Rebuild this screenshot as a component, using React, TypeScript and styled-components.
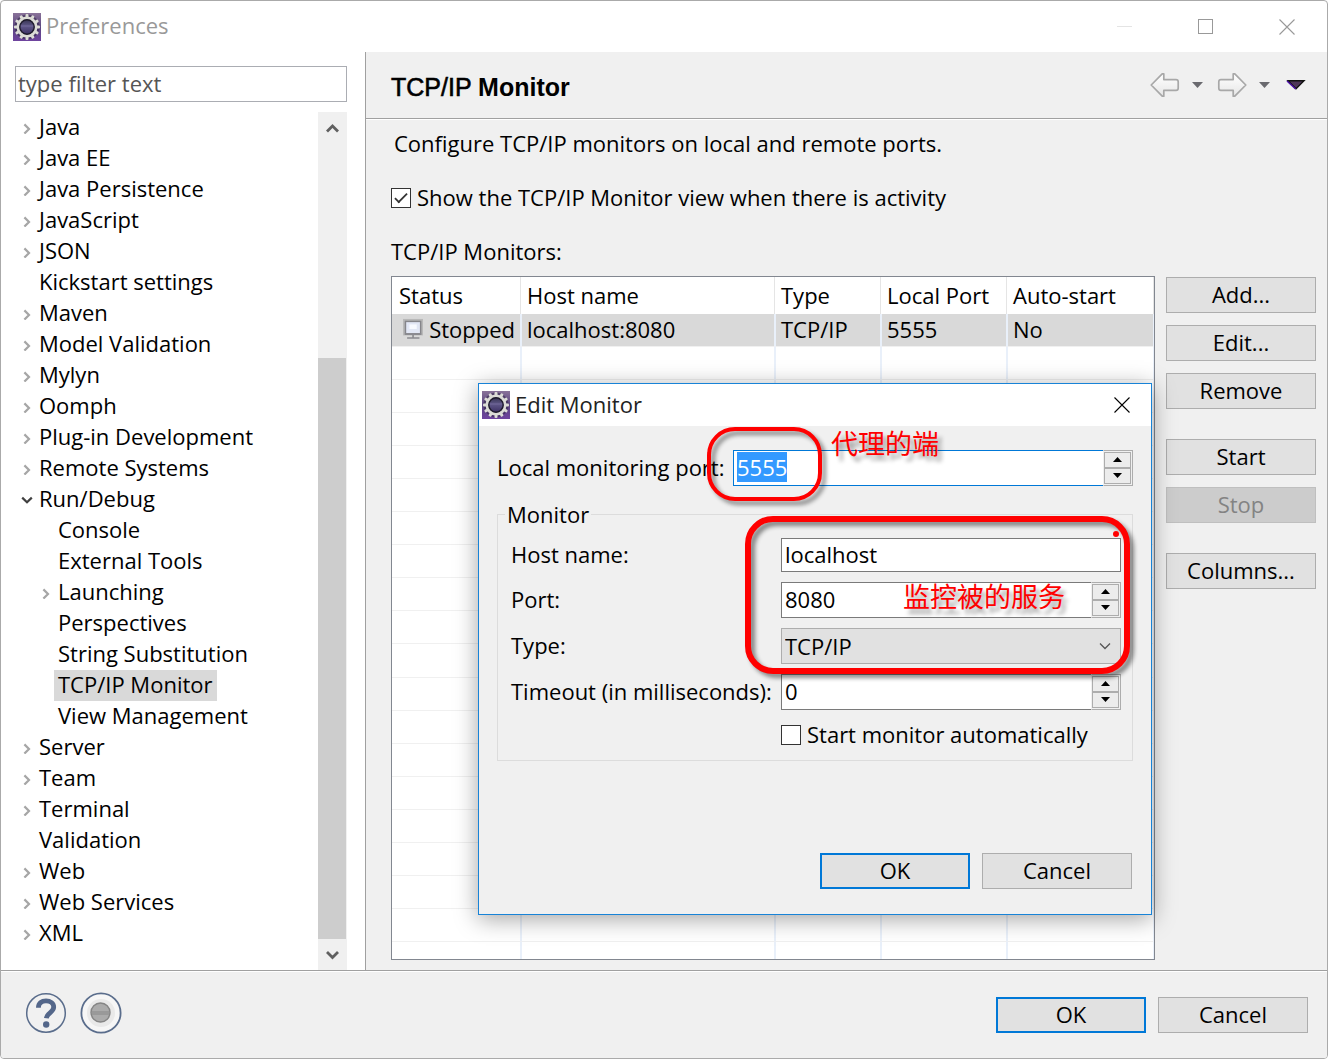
import React, { useEffect, useId, useRef, useState } from "react";
import styled, { createGlobalStyle, css } from "styled-components";

const GlobalStyle = createGlobalStyle`
  *, *::before, *::after { box-sizing: border-box; }
  body {
    margin: 0;
    background: #fff;
    color: #000;
    font-family: "Open Sans", "Noto Sans", "Noto Sans CJK SC", sans-serif;
    font-size: 22px;
    line-height: 30px;
  }
  button, input, select { font: inherit; color: inherit; margin: 0; }
`;

/* ---------- shared controls ---------- */

const PushButton = styled.button<{ $primary?: boolean }>`
  width: 150px;
  height: 36px;
  padding: 0 0 2px;
  line-height: 30px;
  background: #e1e1e1;
  border: ${(p) => (p.$primary ? "2px solid #0078d7" : "1px solid #adadad")};
  &:disabled {
    background: #ccc;
    border-color: #bfbfbf;
    color: #838383;
  }
`;

const ButtonRow = styled.div`
  display: flex;
  justify-content: flex-end;
  gap: 12px;
`;

const IconButton = styled.button`
  display: flex;
  align-items: center;
  justify-content: center;
  padding: 0;
  border: 0;
  background: none;
`;

const CheckLabel = styled.label`
  display: flex;
  align-items: center;
  gap: 6px;
`;

const CheckBox = styled.input.attrs({ type: "checkbox" })`
  appearance: none;
  flex: none;
  width: 20px;
  height: 20px;
  border: 1px solid #333;
  background: #fff;
  display: grid;
  place-items: center;
  &&:not(:disabled) { margin-top: 2px; }
  &:checked::before {
    content: "";
    width: 14px;
    height: 7px;
    border: solid #333;
    border-width: 0 0 2px 2px;
    transform: translateY(-2px) rotate(-45deg) scale(0.9);
  }
`;

const TextBox = styled.input<{ $tone?: string }>`
  width: 100%;
  min-width: 0;
  height: 34px;
  padding: 0 3px 2px;
  border: 1px solid ${(p) => p.$tone ?? "#7a7a7a"};
  border-radius: 0;
  background: #fff;
  outline: none;
  &::placeholder { color: #555; opacity: 1; }
  &::selection { background: #3399ff; color: #fff; }
`;

/* ---------- window ---------- */

const Window = styled.div`
  position: relative;
  display: flex;
  flex-direction: column;
  min-height: 100vh;
  border: 1px solid #aaa;
  border-radius: 4px;
  overflow: hidden;
`;

const TitleBar = styled.header`
  display: flex;
  align-items: center;
  height: 51px;
  padding: 0 32px 0 12px;
  gap: 5px;
`;

const WindowTitle = styled.h1<{ $color: string }>`
  flex: 1;
  margin: 0;
  padding-bottom: 3px;
  font-size: 22px;
  font-weight: 400;
  line-height: 30px;
  color: ${(p) => p.$color};
`;

const CaptionButtons = styled.div`
  display: flex;
  gap: 65px;
`;

const Body = styled.div`
  flex: 1;
  display: flex;
  border-bottom: 1px solid #a0a0a0;
`;

const Footer = styled.footer`
  display: flex;
  align-items: center;
  justify-content: space-between;
  height: 87px;
  padding: 0 19px 0 24px;
  border-top: 1px solid #fff;
  background: #f0f0f0;
`;

const FooterTools = styled.div`
  display: flex;
  gap: 13px;
  padding-bottom: 4px;
`;

/* ---------- sidebar ---------- */

const Sidebar = styled.aside`
  display: flex;
  flex-direction: column;
  flex: none;
  width: 365px;
  padding: 14px 18px 0 14px;
  gap: 10px;
  border-right: 1px solid #a0a0a0;
`;

const FilterBox = styled(TextBox)`
  height: 36px;
  padding: 0 2px 2px;
`;

const TreeArea = styled.div`
  flex: 1;
  display: flex;
`;

const Tree = styled.ul`
  flex: 1;
  margin: 0;
  padding: 0 0 20px;
  list-style: none;
`;

const TreeItem = styled.li<{ $level: number }>`
  display: flex;
  align-items: center;
  height: 31px;
  padding-left: ${(p) => 3 + p.$level * 19}px;
`;

const Twisty = styled.span`
  display: flex;
  justify-content: center;
  width: 17px;
`;

const TreeLabel = styled.span<{ $selected?: boolean }>`
  height: 31px;
  padding: 0 4px;
  line-height: 28px;
  background: ${(p) => (p.$selected ? "#d9d9d9" : "transparent")};
`;

const ScrollBar = styled.div`
  display: flex;
  flex-direction: column;
  width: 29px;
  background: #f0f0f0;
`;

const ScrollStep = styled(IconButton)`
  height: 31px;
`;

const ScrollGap = styled.div`
  flex: 215;
`;

const ScrollThumb = styled.div`
  flex: 582;
  margin-right: 1px;
  background: #cdcdcd;
`;

/* ---------- preference page ---------- */

const Page = styled.main`
  flex: 1;
  min-width: 0;
  display: flex;
  flex-direction: column;
  background: #f0f0f0;
`;

const PageHeader = styled.div`
  display: flex;
  align-items: center;
  justify-content: space-between;
  height: 67px;
  padding: 0 21px 0 25px;
  border-bottom: 1px solid #a0a0a0;
`;

const PageTitle = styled.h2`
  margin: 0;
  padding-top: 4px;
  font-family: "Liberation Sans", Arial, sans-serif;
  font-size: 25px;
  font-weight: 400;
  line-height: 30px;
  -webkit-text-stroke: 0.6px #000;
`;

const HeavyWord = styled.span`
  font-weight: 700;
  -webkit-text-stroke: 0;
`;

const NavTools = styled.div`
  display: flex;
  align-items: center;
  gap: 12px;
`;

const NavDropdown = styled(IconButton)`
  margin-right: 2px;
`;

const NavMenu = styled(IconButton)`
  margin-left: 2px;
`;

const PageContent = styled.div`
  flex: 1;
  display: flex;
  flex-direction: column;
  padding: 8px 11px 10px 25px;
  border-top: 1px solid #fff;
`;

const Description = styled.p`
  margin: 0 0 24px 3px;
`;

const ListHeading = styled.div`
  margin: 24px 0 10px;
`;

const MonitorsArea = styled.div`
  flex: 1;
  display: flex;
  gap: 11px;
`;

const TableFrame = styled.div`
  flex: 1;
  min-width: 0;
  border: 1px solid #828790;
  background: #fff;
`;

const Table = styled.table`
  width: 100%;
  height: 100%;
  table-layout: fixed;
  border-collapse: separate;
  border-spacing: 0;
`;

const HeadCell = styled.th`
  height: 37px;
  padding: 0 6px 2px;
  border-right: 1px solid #e5e5e5;
  font-weight: 400;
  text-align: left;
  white-space: nowrap;
  &:first-child { padding-left: 7px; }
`;

const Cell = styled.td`
  padding: 0 5px 2px;
  border: solid #e9f0fa;
  border-width: 0 1px;
  white-space: nowrap;
  &:first-child {
    padding-left: 7px;
    border-left: 0;
  }
`;

const Row = styled.tr<{ $selected?: boolean; $last?: boolean }>`
  height: ${(p) => (p.$last ? 17 : 33)}px;
  & > td {
    border-bottom: ${(p) => (p.$last ? "0" : "1px solid #f0f0f0")};
    ${(p) =>
      p.$selected &&
      css`
        background: #d9d9d9;
        background-clip: padding-box;
      `}
  }
`;

const StatusCell = styled.span`
  display: flex;
  align-items: center;
  gap: 6px;
  padding-left: 4px;
`;

const SideButtons = styled.div`
  display: flex;
  flex-direction: column;
  gap: 30px;
  padding-top: 1px;
`;

const SideGroup = styled.div`
  display: flex;
  flex-direction: column;
  gap: 12px;
`;

/* ---------- dialog ---------- */

const Dialog = styled.section`
  position: absolute;
  left: 477px;
  top: 382px;
  width: 674px;
  border: 1px solid #1883d7;
  background: #f0f0f0;
  box-shadow: 0 4px 22px rgba(0, 0, 0, 0.36);
`;

const DialogTitleBar = styled.div`
  display: flex;
  align-items: center;
  height: 42px;
  padding: 0 21px 0 3px;
  gap: 5px;
  background: #fff;
`;

const DialogBody = styled.div`
  padding: 24px 18px 25px;
`;

const DialogButtons = styled(ButtonRow)`
  padding-right: 1px;
`;

const PortRow = styled.div`
  display: grid;
  grid-template-columns: 225px 1fr;
  gap: 11px;
  align-items: center;
`;

const Group = styled.fieldset`
  min-width: 0;
  margin: 13px 0 92px;
  padding: 9px 11px 12px 13px;
  border: 1px solid #dcdcdc;
`;

const Legend = styled.legend`
  margin-left: -6px;
  padding: 0 2px;
`;

const FieldGrid = styled.div`
  display: grid;
  grid-template-columns: 260px 1fr;
  gap: 10px;
  align-items: center;
`;

const FieldLabel = styled.label`
  padding-bottom: 2px;
  white-space: nowrap;
`;

const AutoStart = styled.div`
  grid-column: 2;
  line-height: 28px;
`;

const SpinnerFrame = styled.div`
  display: flex;
  height: 36px;
`;

const SpinnerInput = styled(TextBox)`
  height: 36px;
  border-right: 0;
`;

const SpinnerButtons = styled.div`
  display: flex;
  flex-direction: column;
  flex: none;
  width: 30px;
  padding: 1px 1px 1px 0;
  border: 1px solid #adadad;
  border-left-color: #f0f0f0;
`;

const SpinStep = styled(IconButton)`
  flex: 1;
  padding-bottom: 2px;
  border: 1px solid #adadad;
  background: #ececec;
`;

const SelectFrame = styled.div`
  display: grid;
  align-items: center;
  & > * { grid-area: 1 / 1; }
  & > svg { justify-self: end; margin-right: 10px; pointer-events: none; }
`;

const Select = styled.select`
  appearance: none;
  width: 100%;
  height: 36px;
  padding: 0 3px 1px;
  border: 1px solid #adadad;
  border-radius: 0;
  background: #e1e1e1;
`;

/* ---------- annotations drawn over the dialog ---------- */

const Highlight = styled.div<{ $x: number; $y: number; $w: number; $h: number; $line: number }>`
  position: absolute;
  left: ${(p) => p.$x}px;
  top: ${(p) => p.$y}px;
  width: ${(p) => p.$w}px;
  height: ${(p) => p.$h}px;
  border: ${(p) => p.$line}px solid #f00;
  border-radius: 28px;
  filter: drop-shadow(4px 4px 2px rgba(0, 0, 0, 0.45));
  pointer-events: none;
`;

const Note = styled.span<{ $x: number; $y: number }>`
  position: absolute;
  left: ${(p) => p.$x}px;
  top: ${(p) => p.$y}px;
  color: #f00;
  font-family: "Noto Sans CJK SC", sans-serif;
  font-size: 27px;
  line-height: 30px;
  white-space: nowrap;
  text-shadow: 4px 5px 4px rgba(0, 0, 0, 0.4);
  pointer-events: none;
`;

const Dot = styled.span`
  position: absolute;
  left: 634px;
  top: 147px;
  width: 6px;
  height: 6px;
  border-radius: 50%;
  background: #f00;
`;

/* ---------- icons ---------- */

const GearIcon = () => {
  const id = useId();
  const teeth = Array.from({ length: 12 }, (_, i) => i * 30);
  return (
    <svg width="28" height="28" viewBox="0 0 28 28" aria-hidden="true">
      <defs>
        <linearGradient id={id} x1="0" y1="0" x2="0" y2="1">
          <stop offset="0" stopColor="#8a7399" />
          <stop offset="0.5" stopColor="#5a4580" />
          <stop offset="1" stopColor="#6f449f" />
        </linearGradient>
        <linearGradient id={id + "c"} x1="0" y1="0" x2="0" y2="1">
          <stop offset="0" stopColor="#2b2a42" />
          <stop offset="0.45" stopColor="#5f5788" />
          <stop offset="1" stopColor="#35285c" />
        </linearGradient>
      </defs>
      <rect width="28" height="28" fill={`url(#${id})`} />
      <circle cx="14" cy="14" r="12.5" fill="#35294c" opacity="0.6" />
      {teeth.map((a) => (
        <rect key={a} x="12.5" y="1" width="3" height="4.5" rx="1" fill="#dcdcd6" transform={`rotate(${a} 14 14)`} />
      ))}
      <circle cx="14" cy="14" r="9" fill={`url(#${id}c)`} stroke="#dcdcd6" strokeWidth="3" />
      <circle cx="14" cy="14" r="7.2" fill="none" stroke="#1f1b2c" strokeWidth="1.4" />
      <path d="M8 13h12" stroke="#7a70a2" strokeWidth="1" opacity="0.7" />
    </svg>
  );
};

const CrossIcon = ({ color }: { color: string }) => (
  <svg width="16" height="16" viewBox="0 0 16 16" aria-hidden="true">
    <path d="M0.5 0.5l15 15M15.5 0.5l-15 15" stroke={color} strokeWidth="1.1" />
  </svg>
);

const MinimizeIcon = () => (
  <svg width="16" height="16" viewBox="0 0 16 16" aria-hidden="true">
    <path d="M0 7.5h15" stroke="#e4e4e4" />
  </svg>
);

const MaximizeIcon = () => (
  <svg width="16" height="16" viewBox="0 0 16 16" aria-hidden="true">
    <rect x="0.5" y="0.5" width="14" height="14" fill="none" stroke="#999" />
  </svg>
);

const TwistyIcon = ({ open }: { open?: boolean }) =>
  open ? (
    <svg width="12" height="12" viewBox="0 0 12 12" aria-hidden="true">
      <path d="M1.2 3.6L6 8.2l4.8-4.6" fill="none" stroke="#404040" strokeWidth="2.2" />
    </svg>
  ) : (
    <svg width="12" height="12" viewBox="0 0 12 12" aria-hidden="true">
      <path d="M3.4 2.4L8 7l-4.600 4.600" fill="none" stroke="#a6a6a6" strokeWidth="2.200" />
    </svg>
  );

const ScrollArrow = ({ down }: { down?: boolean }) => (
  <svg width="13" height="10" viewBox="0 0 13 10" aria-hidden="true">
    <path d={down ? "M1 2l5.500 5.500L12 2" : "M1 8.500L6.500 3 12 8.500"} fill="none" stroke="#606060" strokeWidth="2.800" />
  </svg>
);

const NavArrow = ({ right }: { right?: boolean }) => {
  const id = useId();
  return (
    <svg width="30" height="26" viewBox="0 0 30 26" aria-hidden="true">
      <defs>
        <linearGradient id={id} x1="0" y1="0" x2="0" y2="1">
          <stop offset="0" stopColor="#fff" />
          <stop offset="1" stopColor="#e6e6e6" />
        </linearGradient>
      </defs>
      <path
        d="M1.2 13L12.2 1.8h1.6v5.8h12.2q2.2 0 2.2 2.2v6.4q0 2.2-2.2 2.2H13.8v5.8h-1.6z"
        fill={`url(#${id})`}
        stroke="#a8a8a8"
        strokeWidth="1.7"
        strokeLinejoin="round"
        transform={right ? "translate(30 0) scale(-1 1)" : undefined}
      />
    </svg>
  );
};

const DropIcon = () => (
  <svg width="11" height="6" viewBox="0 0 11 6" aria-hidden="true">
    <path d="M0 0h11L5.5 6z" fill="#6a6a6f" />
  </svg>
);

const MenuIcon = () => (
  <svg width="20" height="10" viewBox="0 0 20 10" aria-hidden="true">
    <path d="M2 0.8h16L10 8.8z" fill="#4d3558" stroke="#111" strokeWidth="1.4" />
    <path d="M1 1l8.6 8" stroke="#4b0fa8" strokeWidth="1.4" />
  </svg>
);

const SpinArrow = ({ down }: { down?: boolean }) => (
  <svg width="9" height="5" viewBox="0 0 9 5" aria-hidden="true">
    <path d={down ? "M0 0h9L4.5 5z" : "M0 5h9L4.5 0z"} fill="#000" />
  </svg>
);

const ChevronIcon = () => (
  <svg width="12" height="8" viewBox="0 0 12 8" aria-hidden="true">
    <path d="M1 1.5l5 5 5-5" fill="none" stroke="#555" strokeWidth="1.3" />
  </svg>
);

const ComputerIcon = () => (
  <svg width="22" height="22" viewBox="0 0 22 22" aria-hidden="true">
    <rect x="0" y="0" width="22" height="18" fill="#b9b9b9" />
    <rect x="2.7" y="2.7" width="16.6" height="13.6" fill="#e2e7f5" stroke="#85858a" strokeWidth="1.6" />
    <rect x="7" y="6" width="8" height="5" fill="#f8faff" />
    <path d="M2 16.6h18M11 17v3.5M4.5 20.8h13.5" stroke="#8b8b90" strokeWidth="1.8" />
  </svg>
);

const HelpIcon = () => (
  <svg width="42" height="42" viewBox="0 0 42 42" aria-hidden="true">
    <circle cx="21" cy="21" r="19.3" fill="#f1f1f1" stroke="#5a6d8c" strokeWidth="1.5" />
    <path d="M13.4 15.8c0-4.400 3.200-7 7.600-7s7.700 2.500 7.700 6.300c0 5.300-6.600 5.400-7.300 11.200" fill="none" stroke="#54678a" strokeWidth="4.800" />
    <circle cx="21.2" cy="32.500" r="3.200" fill="#54678a" />
  </svg>
);

const RecordIcon = () => (
  <svg width="42" height="42" viewBox="0 0 42 42" aria-hidden="true">
    <circle cx="21" cy="21" r="19.6" fill="#f6f6f6" stroke="#5a6d8c" strokeWidth="1.8" />
    <circle cx="21" cy="21" r="14" fill="#e9e9e9" />
    <circle cx="20.500" cy="20.500" r="9.500" fill="#ababab" stroke="#858585" strokeWidth="1.400" />
    <path d="M12 21h17" stroke="#999" strokeWidth="4" />
  </svg>
);

/* ---------- composed parts ---------- */

interface SpinnerProps {
  id: string;
  initial: string;
  tone?: string;
  selected?: boolean;
}

const Spinner = ({ id, initial, tone, selected }: SpinnerProps) => {
  const [value, setValue] = useState(initial);
  const ref = useRef<HTMLInputElement>(null);
  useEffect(() => {
    if (selected) {
      ref.current?.focus();
      ref.current?.select();
    }
  }, [selected]);
  const step = (by: number) => setValue((v) => String(Math.max(0, Number(v) + by)));
  return (
    <SpinnerFrame>
      <SpinnerInput ref={ref} id={id} $tone={tone} value={value} onChange={(e) => setValue(e.target.value)} />
      <SpinnerButtons>
        <SpinStep type="button" aria-label="Increase" onClick={() => step(1)}>
          <SpinArrow />
        </SpinStep>
        <SpinStep type="button" aria-label="Decrease" onClick={() => step(-1)}>
          <SpinArrow down />
        </SpinStep>
      </SpinnerButtons>
    </SpinnerFrame>
  );
};

interface TreeNode {
  label: string;
  level?: number;
  state?: "closed" | "open";
  selected?: boolean;
}

const nodes: TreeNode[] = [
  { label: "Java", state: "closed" },
  { label: "Java EE", state: "closed" },
  { label: "Java Persistence", state: "closed" },
  { label: "JavaScript", state: "closed" },
  { label: "JSON", state: "closed" },
  { label: "Kickstart settings" },
  { label: "Maven", state: "closed" },
  { label: "Model Validation", state: "closed" },
  { label: "Mylyn", state: "closed" },
  { label: "Oomph", state: "closed" },
  { label: "Plug-in Development", state: "closed" },
  { label: "Remote Systems", state: "closed" },
  { label: "Run/Debug", state: "open" },
  { label: "Console", level: 1 },
  { label: "External Tools", level: 1 },
  { label: "Launching", level: 1, state: "closed" },
  { label: "Perspectives", level: 1 },
  { label: "String Substitution", level: 1 },
  { label: "TCP/IP Monitor", level: 1, selected: true },
  { label: "View Management", level: 1 },
  { label: "Server", state: "closed" },
  { label: "Team", state: "closed" },
  { label: "Terminal", state: "closed" },
  { label: "Validation" },
  { label: "Web", state: "closed" },
  { label: "Web Services", state: "closed" },
  { label: "XML", state: "closed" },
];

const columns = [
  { title: "Status", width: "129px" },
  { title: "Host name", width: "254px" },
  { title: "Type", width: "106px" },
  { title: "Local Port", width: "126px" },
  { title: "Auto-start", width: "auto" },
];

const blankRows = Array.from({ length: 19 }, (_, i) => i);

const EditMonitorDialog = () => (
  <Dialog role="dialog" aria-label="Edit Monitor">
    <DialogTitleBar>
      <GearIcon />
      <WindowTitle as="h2" $color="#222">Edit Monitor</WindowTitle>
      <IconButton type="button" aria-label="Close dialog">
        <CrossIcon color="#000" />
      </IconButton>
    </DialogTitleBar>
    <DialogBody>
      <PortRow>
        <FieldLabel htmlFor="local-port">Local monitoring port:</FieldLabel>
        <Spinner id="local-port" initial="5555" tone="#0078d7" selected />
      </PortRow>
      <Group>
        <Legend>Monitor</Legend>
        <FieldGrid>
          <FieldLabel htmlFor="host">Host name:</FieldLabel>
          <TextBox id="host" defaultValue="localhost" />
          <FieldLabel htmlFor="port">Port:</FieldLabel>
          <Spinner id="port" initial="8080" />
          <FieldLabel htmlFor="type">Type:</FieldLabel>
          <SelectFrame>
            <Select id="type" defaultValue="TCP/IP">
              <option>TCP/IP</option>
            </Select>
            <ChevronIcon />
          </SelectFrame>
          <FieldLabel htmlFor="timeout">Timeout (in milliseconds):</FieldLabel>
          <Spinner id="timeout" initial="0" />
          <AutoStart>
            <CheckLabel>
              <CheckBox />
              Start monitor automatically
            </CheckLabel>
          </AutoStart>
        </FieldGrid>
      </Group>
      <DialogButtons>
        <PushButton type="button" $primary>OK</PushButton>
        <PushButton type="button">Cancel</PushButton>
      </DialogButtons>
    </DialogBody>
    <Highlight $x={228} $y={43} $w={115} $h={74} $line={4} />
    <Highlight $x={266} $y={132} $w={385} $h={158} $line={6} />
    <Note $x={352} $y={44}>代理的端</Note>
    <Note $x={424} $y={197}>监控被的服务</Note>
    <Dot />
  </Dialog>
);

export default function App() {
  return (
    <>
      <GlobalStyle />
      <Window>
        <TitleBar>
          <GearIcon />
          <WindowTitle $color="#999">Preferences</WindowTitle>
          <CaptionButtons>
            <IconButton type="button" aria-label="Minimize"><MinimizeIcon /></IconButton>
            <IconButton type="button" aria-label="Maximize"><MaximizeIcon /></IconButton>
            <IconButton type="button" aria-label="Close"><CrossIcon color="#999" /></IconButton>
          </CaptionButtons>
        </TitleBar>
        <Body>
          <Sidebar>
            <FilterBox $tone="#abadb3" placeholder="type filter text" aria-label="Filter" />
            <TreeArea>
              <Tree>
                {nodes.map((n) => (
                  <TreeItem key={n.label} $level={n.level ?? 0}>
                    <Twisty>{n.state && <TwistyIcon open={n.state === "open"} />}</Twisty>
                    <TreeLabel $selected={n.selected}>{n.label}</TreeLabel>
                  </TreeItem>
                ))}
              </Tree>
              <ScrollBar>
                <ScrollStep type="button" aria-label="Scroll up"><ScrollArrow /></ScrollStep>
                <ScrollGap />
                <ScrollThumb />
                <ScrollStep type="button" aria-label="Scroll down"><ScrollArrow down /></ScrollStep>
              </ScrollBar>
            </TreeArea>
          </Sidebar>
          <Page>
            <PageHeader>
              <PageTitle>TCP/IP <HeavyWord>Monitor</HeavyWord></PageTitle>
              <NavTools>
                <IconButton type="button" aria-label="Back"><NavArrow /></IconButton>
                <NavDropdown type="button" aria-label="Back history"><DropIcon /></NavDropdown>
                <IconButton type="button" aria-label="Forward"><NavArrow right /></IconButton>
                <NavDropdown type="button" aria-label="Forward history"><DropIcon /></NavDropdown>
                <NavMenu type="button" aria-label="Menu"><MenuIcon /></NavMenu>
              </NavTools>
            </PageHeader>
            <PageContent>
              <Description>Configure TCP/IP monitors on local and remote ports.</Description>
              <CheckLabel>
                <CheckBox defaultChecked />
                Show the TCP/IP Monitor view when there is activity
              </CheckLabel>
              <ListHeading>TCP/IP Monitors:</ListHeading>
              <MonitorsArea>
                <TableFrame>
                  <Table aria-label="TCP/IP Monitors">
                    <colgroup>
                      {columns.map((c) => <col key={c.title} style={{ width: c.width }} />)}
                    </colgroup>
                    <thead>
                      <tr>{columns.map((c) => <HeadCell key={c.title}>{c.title}</HeadCell>)}</tr>
                    </thead>
                    <tbody>
                      <Row $selected>
                        <Cell><StatusCell><ComputerIcon />Stopped</StatusCell></Cell>
                        <Cell>localhost:8080</Cell>
                        <Cell>TCP/IP</Cell>
                        <Cell>5555</Cell>
                        <Cell>No</Cell>
                      </Row>
                      {blankRows.map((i) => (
                        <Row key={i} $last={i === blankRows.length - 1} aria-hidden="true">
                          {columns.map((c) => <Cell key={c.title} />)}
                        </Row>
                      ))}
                    </tbody>
                  </Table>
                </TableFrame>
                <SideButtons>
                  <SideGroup>
                    <PushButton type="button">Add...</PushButton>
                    <PushButton type="button">Edit...</PushButton>
                    <PushButton type="button">Remove</PushButton>
                  </SideGroup>
                  <SideGroup>
                    <PushButton type="button">Start</PushButton>
                    <PushButton type="button" disabled>Stop</PushButton>
                  </SideGroup>
                  <PushButton type="button">Columns...</PushButton>
                </SideButtons>
              </MonitorsArea>
            </PageContent>
          </Page>
        </Body>
        <Footer>
          <FooterTools>
            <IconButton type="button" aria-label="Help"><HelpIcon /></IconButton>
            <IconButton type="button" aria-label="Record"><RecordIcon /></IconButton>
          </FooterTools>
          <ButtonRow>
            <PushButton type="button" $primary>OK</PushButton>
            <PushButton type="button">Cancel</PushButton>
          </ButtonRow>
        </Footer>
        <EditMonitorDialog />
      </Window>
    </>
  );
}
